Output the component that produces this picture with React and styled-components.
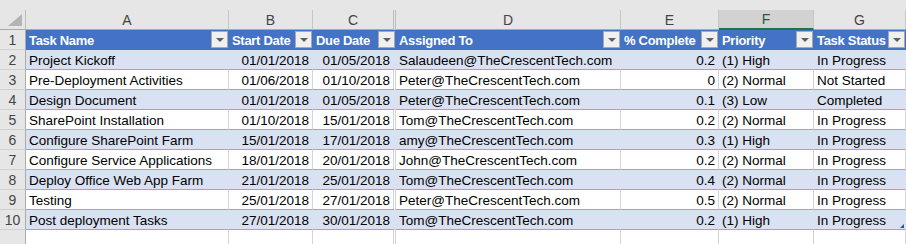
import React from "react";
import styled, { createGlobalStyle, css } from "styled-components";

const GlobalStyle = createGlobalStyle`
  body {
    margin: 0;
    background: #ffffff;
  }
`;

const columns = [
  { letter: "A", title: "Task Name", align: "left" },
  { letter: "B", title: "Start Date", align: "right" },
  { letter: "C", title: "Due Date", align: "right", split: true },
  { letter: "D", title: "Assigned To", align: "left" },
  { letter: "E", title: "% Complete", align: "right" },
  { letter: "F", title: "Priority", align: "left", active: true },
  { letter: "G", title: "Task Status", align: "left" },
];

const rows = [
  ["Project Kickoff", "01/01/2018", "01/05/2018", "Salaudeen@TheCrescentTech.com", "0.2", "(1) High", "In Progress"],
  ["Pre-Deployment Activities", "01/06/2018", "01/10/2018", "Peter@TheCrescentTech.com", "0", "(2) Normal", "Not Started"],
  ["Design Document", "01/01/2018", "01/05/2018", "Peter@TheCrescentTech.com", "0.1", "(3) Low", "Completed"],
  ["SharePoint Installation", "01/10/2018", "15/01/2018", "Tom@TheCrescentTech.com", "0.2", "(2) Normal", "In Progress"],
  ["Configure SharePoint Farm", "15/01/2018", "17/01/2018", "amy@TheCrescentTech.com", "0.3", "(1) High", "In Progress"],
  ["Configure Service Applications", "18/01/2018", "20/01/2018", "John@TheCrescentTech.com", "0.2", "(2) Normal", "In Progress"],
  ["Deploy Office Web App Farm", "21/01/2018", "25/01/2018", "Tom@TheCrescentTech.com", "0.4", "(2) Normal", "In Progress"],
  ["Testing", "25/01/2018", "27/01/2018", "Peter@TheCrescentTech.com", "0.5", "(2) Normal", "In Progress"],
  ["Post deployment Tasks", "27/01/2018", "30/01/2018", "Tom@TheCrescentTech.com", "0.2", "(1) High", "In Progress"],
];

function FilterButton() {
  return (
    <Filter>
      <Arrow />
    </Filter>
  );
}

function App() {
  return (
    <>
      <GlobalStyle />
      <Sheet>
        <TopStrip />
        <Corner>
          <svg width="14" height="12" viewBox="0 0 14 12">
            <polygon points="14,0 14,12 0,12" fill="#b4b4b4" />
          </svg>
        </Corner>
        {columns.map((col) => (
          <ColHeader key={col.letter} $active={col.active} $split={col.split}>
            {col.letter}
          </ColHeader>
        ))}

        <RowHeader>1</RowHeader>
        {columns.map((col) => (
          <HeadCell key={"h" + col.letter}>
            <HeadText>{col.title}</HeadText>
            <FilterButton />
          </HeadCell>
        ))}

        {rows.map((row, r) => (
          <React.Fragment key={"r" + r}>
            <RowHeader>{r + 2}</RowHeader>
            {row.map((value, c) => (
              <Cell
                key={"c" + c}
                $align={columns[c].align}
                $band={r % 2 === 0}
                $split={columns[c].split}
              >
                {value}
                {r === rows.length - 1 && c === row.length - 1 && <ResizeHandle />}
              </Cell>
            ))}
          </React.Fragment>
        ))}

        <RowHeader $last />
        {columns.map((col) => (
          <EmptyCell key={"e" + col.letter} $split={col.split} />
        ))}
      </Sheet>
    </>
  );
}

const Sheet = styled.div`
  display: grid;
  grid-template-columns: 26px 203px 84px 83px 225px 98px 95px 92px;
  grid-template-rows: 10px 20px repeat(10, 20px) 14px;
  width: 906px;
  height: 244px;
  overflow: hidden;
  background: #ffffff;
  font-family: "Liberation Sans", Arial, sans-serif;
  font-size: 13.5px;
  color: #000000;

  & > * {
    box-sizing: border-box;
  }
`;

const TopStrip = styled.div`
  grid-column: 1 / -1;
  background: #e6e6e6;
`;

const Corner = styled.div`
  display: flex;
  align-items: flex-end;
  justify-content: flex-end;
  padding: 0 3px 3px 0;
  background: #e6e6e6;
  border-right: 1px solid #bdbdbd;
  border-bottom: 1px solid #ababab;
`;

const ColHeader = styled.div`
  display: flex;
  align-items: center;
  justify-content: center;
  background: ${(props) => (props.$active ? "#d2d2d2" : "#e6e6e6")};
  color: ${(props) => (props.$active ? "#1e5b3a" : "#444444")};
  border-right: ${(props) => (props.$split ? "3px double #bdbdbd" : "1px solid #c6c6c6")};
  border-bottom: ${(props) => (props.$active ? "2px solid #217346" : "1px solid #ababab")};
  font-size: 14px;
`;

const RowHeader = styled.div`
  display: flex;
  align-items: center;
  justify-content: center;
  background: #e6e6e6;
  color: #444444;
  border-right: 1px solid #ababab;
  border-bottom: ${(props) => (props.$last ? "none" : "1px solid #d0d0d0")};
  font-size: 14px;
`;

const HeadCell = styled.div`
  display: flex;
  align-items: center;
  justify-content: space-between;
  gap: 2px;
  min-width: 0;
  padding-left: 3px;
  background: #4472c4;
  color: #ffffff;
  font-weight: bold;
  white-space: nowrap;
  border-bottom: 1px solid #4472c4;
`;

const HeadText = styled.span`
  padding-top: 1px;
  font-size: 13px;
  letter-spacing: -0.3px;
`;

const Filter = styled.div`
  display: flex;
  align-items: center;
  justify-content: center;
  flex: none;
  width: 17px;
  height: 17px;
  margin-right: 1px;
  box-sizing: border-box;
  background: #f0f0f0;
  border: 1px solid #a9a9a9;
`;

const Arrow = styled.div`
  width: 0;
  height: 0;
  border-left: 4px solid transparent;
  border-right: 4px solid transparent;
  border-top: 4px solid #5f5f5f;
`;

const gridBorder = css`
  border-right: ${(props) =>
    props.$split ? "3px double #d4d4d4" : "1px solid #d4d4d4"};
`;

const Cell = styled.div`
  position: relative;
  display: flex;
  align-items: center;
  justify-content: ${(props) => (props.$align === "right" ? "flex-end" : "flex-start")};
  min-width: 0;
  padding: 1px 3px 0;
  white-space: nowrap;
  background: ${(props) => (props.$band ? "#d9e1f2" : "#ffffff")};
  ${gridBorder};
  border-right-color: ${(props) => (props.$band ? "#d9e1f2" : "#d4d4d4")};
  border-bottom: 1px solid #8ea9db;
`;

const EmptyCell = styled.div`
  ${gridBorder};
`;

const ResizeHandle = styled.span`
  position: absolute;
  right: 1px;
  bottom: 1px;
  width: 4px;
  height: 4px;
  background: #2f4f9e;
  clip-path: polygon(100% 0, 100% 100%, 0 100%);
`;

export default App;
